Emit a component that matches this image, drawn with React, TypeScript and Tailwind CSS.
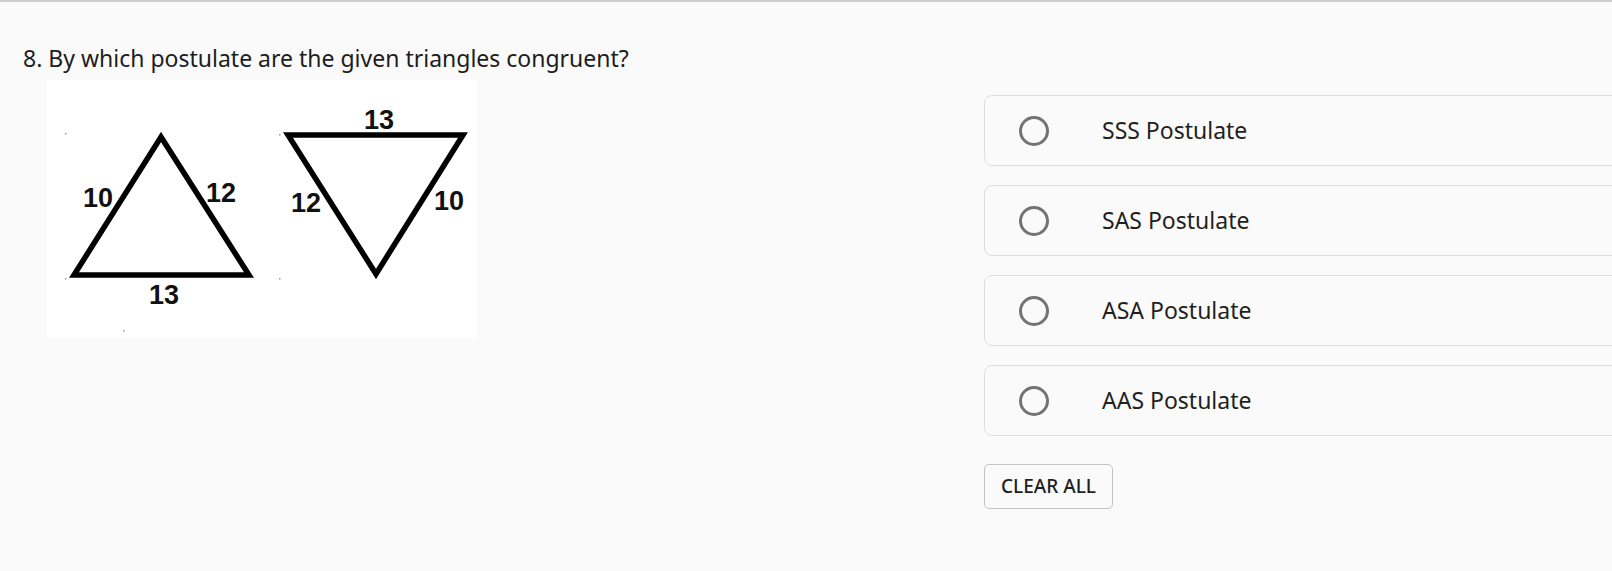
import React from 'react';

const options = ['SSS Postulate', 'SAS Postulate', 'ASA Postulate', 'AAS Postulate'];

function Triangles() {
   const label = { fontFamily: '"Liberation Sans", Arial, sans-serif', fontWeight: 700, fontSize: 27 };
   return (
      <svg width="430" height="258" viewBox="0 0 430 258" className="block">
         <rect x="0" y="0" width="430" height="258" fill="#ffffff" />
         <polygon points="114,57 27,195 202,195" fill="none" stroke="#000" strokeWidth="5.5" />
         <polygon points="241,55 416,55 329,194" fill="none" stroke="#000" strokeWidth="5.5" />
         <g style={label} fill="#111" textAnchor="middle" dominantBaseline="central">
            <text x="51" y="118">10</text>
            <text x="174" y="113">12</text>
            <text x="117" y="215">13</text>
            <text x="332" y="40">13</text>
            <text x="259" y="123">12</text>
            <text x="402" y="121">10</text>
         </g>
         <g fill="#9a9a9a">
            <rect x="18" y="53" width="1.5" height="1.5" />
            <rect x="18" y="198" width="1.5" height="1.5" />
            <rect x="232" y="54" width="1.5" height="1.5" />
            <rect x="232" y="198" width="1.5" height="1.5" />
            <rect x="76" y="250" width="1.5" height="1.5" />
         </g>
      </svg>
   );
}

export default function App() {
   return (
      <div className="w-[1612px] h-[571px] overflow-hidden bg-[#fafafa] border-t-2 border-[#cfcfcf] text-[#1d1d1d] font-['Noto_Sans',_sans-serif]">
         <div className="pl-[23px] pt-[40px]">
            <p className="text-[23px] leading-[32px]">8. By which postulate are the given triangles congruent?</p>
         </div>
         <div className="flex mt-[6px]">
            <div className="w-[984px] shrink-0 pl-[47px]">
               <Triangles />
            </div>
            <div className="w-[800px] shrink-0 pt-[15px]">
               <ul className="flex flex-col gap-[19px]">
                  {options.map(opt => (
                     <li
                        key={opt}
                        className="h-[71px] flex items-center border border-[#dedede] rounded-[8px] bg-[#fafafa] pl-[34px]"
                     >
                        <span className="w-[30px] h-[30px] rounded-full border-[3px] border-[#737373] shrink-0" />
                        <span className="ml-[53px] text-[23px] text-[#1f1f1f]">{opt}</span>
                     </li>
                  ))}
               </ul>
               <button className="mt-[28px] h-[45px] w-[129px] border border-[#c4c4c4] rounded-[5px] bg-[#fafafa] text-[19px] font-medium text-[#1f1f1f]">
                  CLEAR ALL
               </button>
            </div>
         </div>
      </div>
   );
}
